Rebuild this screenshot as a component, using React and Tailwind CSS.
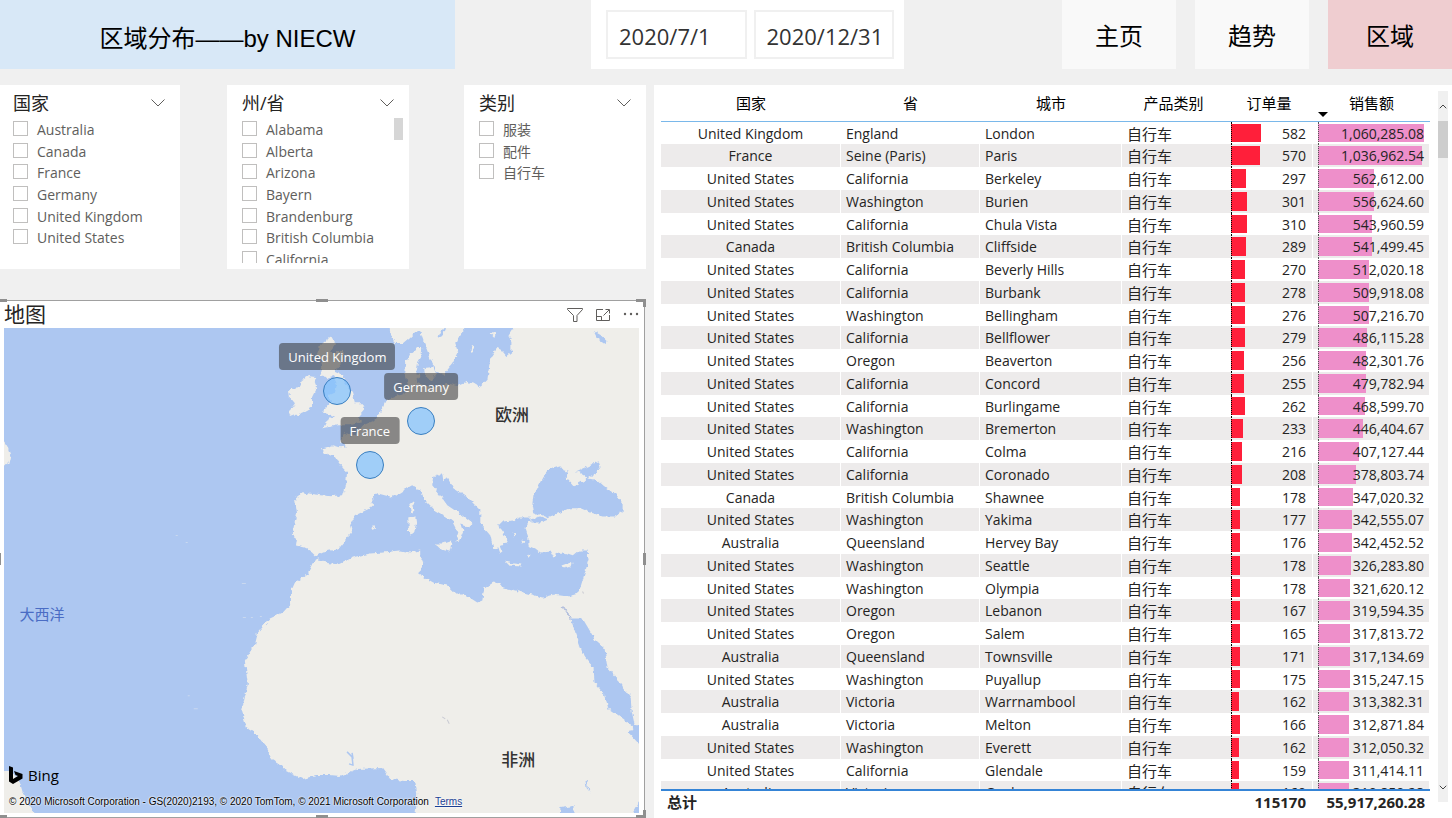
import { useState } from 'react'

const BIKE = '自行车'

const ROWS = [
  ['United Kingdom', 'England', 'London', 582, 1060285.08],
  ['France', 'Seine (Paris)', 'Paris', 570, 1036962.54],
  ['United States', 'California', 'Berkeley', 297, 562612.0],
  ['United States', 'Washington', 'Burien', 301, 556624.6],
  ['United States', 'California', 'Chula Vista', 310, 543960.59],
  ['Canada', 'British Columbia', 'Cliffside', 289, 541499.45],
  ['United States', 'California', 'Beverly Hills', 270, 512020.18],
  ['United States', 'California', 'Burbank', 278, 509918.08],
  ['United States', 'Washington', 'Bellingham', 276, 507216.7],
  ['United States', 'California', 'Bellflower', 279, 486115.28],
  ['United States', 'Oregon', 'Beaverton', 256, 482301.76],
  ['United States', 'California', 'Concord', 255, 479782.94],
  ['United States', 'California', 'Burlingame', 262, 468599.7],
  ['United States', 'Washington', 'Bremerton', 233, 446404.67],
  ['United States', 'California', 'Colma', 216, 407127.44],
  ['United States', 'California', 'Coronado', 208, 378803.74],
  ['Canada', 'British Columbia', 'Shawnee', 178, 347020.32],
  ['United States', 'Washington', 'Yakima', 177, 342555.07],
  ['Australia', 'Queensland', 'Hervey Bay', 176, 342452.52],
  ['United States', 'Washington', 'Seattle', 178, 326283.8],
  ['United States', 'Washington', 'Olympia', 178, 321620.12],
  ['United States', 'Oregon', 'Lebanon', 167, 319594.35],
  ['United States', 'Oregon', 'Salem', 165, 317813.72],
  ['Australia', 'Queensland', 'Townsville', 171, 317134.69],
  ['United States', 'Washington', 'Puyallup', 175, 315247.15],
  ['Australia', 'Victoria', 'Warrnambool', 162, 313382.31],
  ['Australia', 'Victoria', 'Melton', 166, 312871.84],
  ['United States', 'Washington', 'Everett', 162, 312050.32],
  ['United States', 'California', 'Glendale', 159, 311414.11],
  ['Australia', 'Victoria', 'Geelong', 160, 310850.28],
]

const MAX_ORDERS = 582
const MAX_SALES = 1060285.08

const COUNTRIES = ['Australia', 'Canada', 'France', 'Germany', 'United Kingdom', 'United States']
const STATES = ['Alabama', 'Alberta', 'Arizona', 'Bayern', 'Brandenburg', 'British Columbia', 'California']
const CATEGORIES = ['服装', '配件', BIKE]

// positions in percent of the map
const PINS = [
  { name: 'United Kingdom', left: 52.5, top: 13 },
  { name: 'Germany', left: 65.7, top: 19.2 },
  { name: 'France', left: 57.6, top: 28.3 },
]

const money = (n) => n.toLocaleString('en-US', { minimumFractionDigits: 2, maximumFractionDigits: 2 })

function Chevron({ className, strokeWidth = 1 }) {
  return (
    <svg viewBox="-1 -1 16 10" fill="none" stroke="currentColor" strokeWidth={strokeWidth} className={className}>
      <path d="M.5.5 7 7 13.5.5" />
    </svg>
  )
}

function Slicer({ title, items, scrollable, className }) {
  return (
    <section className={`flex h-[184px] flex-col bg-white pb-[6px] ${className}`}>
      <div className="flex h-9 shrink-0 items-center justify-between pr-[14px]">
        <h2 className="text-[18px] leading-6 text-[#252423]">{title}</h2>
        <button type="button" aria-label={title} className="text-[#605e5c]">
          <Chevron className="h-[10px] w-4" />
        </button>
      </div>
      <div className="flex min-h-0 flex-1">
        <ul className="min-w-0 flex-1 overflow-hidden">
          {items.map((item) => (
            <li key={item} className="h-[22px] nth-[3n+2]:h-[21px]">
              <label className="flex h-full items-start gap-[9px] text-[14px] leading-[18px] whitespace-nowrap text-[#605e5c]">
                <input type="checkbox" className="h-[15px] w-[15px] shrink-0 appearance-none border border-[#c0bfbe] bg-white checked:bg-[#605e5c]" />
                {item}
              </label>
            </li>
          ))}
        </ul>
        {scrollable && <div className="mr-[6px] -mt-[3px] h-[22px] w-[9px] bg-[#d6d6d6]" />}
      </div>
    </section>
  )
}

function MapDrawing() {
  return (
    <svg viewBox="4 328 635 484" preserveAspectRatio="xMidYMid slice" className="absolute inset-0 h-full w-full">
      <filter id="coast" x="0" y="0" width="100%" height="100%" colorInterpolationFilters="sRGB">
        <feTurbulence type="fractalNoise" baseFrequency="0.22" numOctaves="2" seed="4" />
        <feDisplacementMap in="SourceGraphic" scale="5" xChannelSelector="R" yChannelSelector="G" />
      </filter>
      <rect x="4" y="328" width="635" height="484" fill="#adc7f1" />
      <g filter="url(#coast)">
        <rect x="-10" y="310" width="670" height="520" fill="#adc7f1" />
        <g fill="#efeeea">
          {/* Europe, Asia Minor and Africa */}
          <path d="M660 310H514L513 328 508 336 511 341 511 352 506 356 501 350 497 348 490 358 488 373 487 380 480 387 475 384 467 382 457 386 445 383 436 387 426 386 417 383 416 374 418 362 421 357 422 348 417 348 410 354 406 362 405 374 408 386 404 394 394 396 385 401 380 413 375 420 363 425 358 431 352 436 344 433 340 441 346 446 340 447 333 445 322 448 325 453 335 457 342 467 347 472 346 485 343 495 330 496 313 494 303 492 295 498 297 512 293 530 293 535 297 538 296 545 305 547 312 552 316 556 323 551 338 549 347 538 352 532 350 525 355 515 370 508 373 505 372 498 377 493 392 497 403 490 412 485 420 490 425 500 435 510 447 517 453 522 458 532 455 541 459 540 463 530 461 524 470 527 472 523 462 515 447 505 440 495 432 485 433 477 442 473 443 480 447 477 453 488 467 497 480 510 480 523 490 535 493 548 498 547 500 553 503 551 500 544 508 543 503 532 498 525 502 521 513 520 520 517 528 517 531 520 527 523 525 528 528 537 528 545 535 548 540 552 550 551 553 556 561 551 573 555 579 550 587 550 588 560 585 570 578 593 567 596 553 594 542 597 523 592 503 587 500 583 493 582 484 588 482 600 477 602 463 593 455 593 447 585 433 582 418 573 423 563 420 556 420 550 410 552 400 550 383 552 370 553 353 557 338 564 325 562 319 558 315 559 308 573 295 583 291 592 291 603 283 612 270 618 258 632 255 644 245 660 248 683 242 710 247 727 255 732 267 747 272 758 287 770 303 778 317 774 330 774 340 775 357 768 382 767 390 778 405 780 415 780 417 793 414 830H660Z" />
          {/* Scandinavia */}
          <path d="M388 310 390 332 395 343 403 343 410 337 416 331 420 332 424 343 430 358 437 373 443 375 452 364 458 352 455 343 463 332 462 310Z" />
          <path d="M424 368 433 367 436 374 431 381 425 376ZM471 346 474 344 473 352 470 353ZM490 334 496 332 494 338ZM414 373 420 374 418 379Z" />
          {/* Great Britain and Ireland */}
          <path d="M332 337 325 341 320 346 317 354 322 361 320 374 326 378 333 376 337 384 335 392 328 395 331 402 322 412 335 416 327 420 323 428 337 425 350 425 361 422 358 417 365 409 362 403 355 403 352 392 345 383 342 375 335 372 344 358 342 352 330 352 336 344Z" />
          <path d="M308 376 315 377 317 387 312 397 312 407 303 412 293 416 288 413 295 403 290 397 289 389 300 388 302 380Z" />
          {/* Mediterranean islands */}
          <path d="M409 504 413 501 414 510 411 513ZM408 517 415 515 416 522 414 532 409 534ZM434 543 443 543 452 540 449 551 441 549ZM371 526 375 526 374 530ZM505 561 513 563 522 564 521 566 509 565ZM562 565 573 561 570 566 564 568ZM512 532 516 534 514 537ZM521 540 525 541 522 543ZM528 553 531 555 528 558Z" />
          {/* west edge */}
          <path d="M-10 440H4L8 446 11 455 9 464H-10ZM-10 770H12L20 780 25 797 33 808 40 830H-10Z" />
        </g>
        <g fill="#adc7f1">
          {/* Black Sea and Sea of Azov */}
          <path d="M532 503 533 495 537 487 543 476 550 468 560 465 562 470 572 473 577 471 588 466 598 461 600 467 595 474 588 478 597 480 606 488 616 495 622 503 622 511 614 516 603 516 590 512 580 508 570 508 560 512 547 517 540 514 534 514ZM531 519 540 516 548 519 540 522 531 522Z" />
          {/* Red Sea */}
          <path d="M570 618 582 618 588 628 595 640 604 648 607 667 618 680 630 697 631 710 634 724 660 728V745H640L628 732 633 726 620 716 608 708 603 693 594 682 593 667 583 655 577 638Z" />
          <path d="M593 331 600 335 606 341 604 344 597 339ZM438 338 441 330 445 329 442 336ZM585 780 587 778 587 786 591 793 586 787ZM558 830 560 807 573 805 573 830ZM622 830 640 799H660V830Z" />
        </g>
        <path d="M563 606 570 618" stroke="#b3bfdd" strokeWidth="2" />
        <path d="M568 470 578 472 588 478 573 486 565 477Z" fill="#efeeea" />
      </g>
      <path d="M347 751 352 756 353 765M349 763 352 764M352 752 353 758" fill="none" stroke="#adc7f1" strokeWidth="1.5" />
      <path d="M442 716 445 718M447 719 449 723M583 593 582 591" fill="none" stroke="#c9cbd3" strokeWidth="1" />
      <path d="M176 535h2M186 542h2M242 583h4M243 617h3M251 617h2M260 616h2M188 695h2M194 708h4" stroke="#c9d8ef" strokeWidth="1" />
    </svg>
  )
}

function MapPanel() {
  return (
    <section className="relative mt-[31px] mr-px flex min-h-0 flex-1 flex-col border-y border-r border-[#a0a0a0] bg-white pr-[5px] pb-1 pl-1">
      <div className="flex h-[27px] shrink-0 items-center justify-between">
        <h2 className="text-[21px] leading-[27px] text-[#252423]">地图</h2>
        <div className="flex items-center gap-3 text-[#605e5c]">
          <button type="button" aria-label="筛选器">
            <svg viewBox="0 0 16 16" fill="none" stroke="currentColor" strokeWidth="1" className="h-4 w-4">
              <path d="M.5 1.5h15v1L10 8.5v6H6.5v-6L.5 2.5Z" />
            </svg>
          </button>
          <button type="button" aria-label="焦点模式">
            <svg viewBox="0 0 16 16" fill="none" stroke="currentColor" strokeWidth="1" className="h-4 w-4">
              <path d="M8 2.5H1.5v11h13V8M1.5 9.5h5v4M8.500 8.500 14 3M10.500 2.500h4v4" />
            </svg>
          </button>
          <button type="button" aria-label="更多选项">
            <svg viewBox="0 0 16 16" fill="currentColor" className="h-4 w-4">
              <circle cx="2" cy="7" r="1.200" />
              <circle cx="8" cy="7" r="1.200" />
              <circle cx="14" cy="7" r="1.200" />
            </svg>
          </button>
        </div>
      </div>

      <div className="relative min-h-0 flex-1 overflow-hidden">
        <MapDrawing />
        <span className="absolute top-[18%] left-[80%] -translate-x-1/2 -translate-y-1/2 text-[17px] font-medium text-[#333]">欧洲</span>
        <span className="absolute top-[89%] left-[81%] -translate-x-1/2 -translate-y-1/2 text-[17px] font-medium text-[#333]">非洲</span>
        <span className="absolute top-[59%] left-[6%] -translate-x-1/2 -translate-y-1/2 text-[15px] text-[#4a6cc4]">大西洋</span>

        {PINS.map((pin) => (
          <div key={pin.name} className="absolute" style={{ left: `${pin.left}%`, top: `${pin.top}%` }}>
            <span className="absolute bottom-[21px] left-0 -translate-x-1/2 rounded-[4px] bg-[#333]/55 px-[9px] pt-px text-[13px] leading-[26px] whitespace-nowrap text-white">
              {pin.name}
            </span>
            <span className="absolute h-7 w-7 -translate-x-1/2 -translate-y-1/2 rounded-full border border-[#3a7fc0] bg-[#85c3fc]/75" />
          </div>
        ))}

        <div className="absolute bottom-1 left-[5px]">
          <div className="flex items-center gap-[5px] text-[15px] leading-5 text-black">
            <svg viewBox="0 0 14 20" className="h-5 w-3.5">
              <path d="M0 1 4 2.500V14l5-3-2.500-1L5 6l8.500 3v4.500L4 19l-4-2.500Z" />
            </svg>
            Bing
          </div>
          <p className="mt-[10px] flex gap-1.5 font-['Liberation_Sans'] text-[10px] leading-[14px] whitespace-nowrap text-black [text-shadow:0_0_2px_#fff,0_0_2px_#fff]">
            © 2020 Microsoft Corporation - GS(2020)2193, © 2020 TomTom, © 2021 Microsoft Corporation
            <a href="#terms" className="text-[#1b3f94] underline">Terms</a>
          </p>
        </div>
      </div>

      {/* resize handles */}
      <span className="absolute -top-[2px] left-0 h-[3px] w-[7px] bg-[#8f8f8f]" />
      <span className="absolute -top-[2px] left-1/2 h-[3px] w-3 -translate-x-1/2 bg-[#8f8f8f]" />
      <span className="absolute -top-[2px] -right-[2px] h-2 w-[10px] border-t-[3px] border-r-[3px] border-[#8f8f8f]" />
      <span className="absolute top-1/2 left-0 h-3 w-px -translate-y-1/2 bg-[#8f8f8f]" />
      <span className="absolute top-1/2 -right-[2px] h-3 w-[3px] -translate-y-1/2 bg-[#8f8f8f]" />
      <span className="absolute -bottom-px left-0 h-[3px] w-[7px] bg-[#8f8f8f]" />
      <span className="absolute -bottom-px left-1/2 h-[3px] w-3 -translate-x-1/2 bg-[#8f8f8f]" />
      <span className="absolute -right-[2px] -bottom-px h-2 w-[10px] border-r-[3px] border-b-[3px] border-[#8f8f8f]" />
    </section>
  )
}

const HEAD = 'relative border-b border-[#7ab8ea] p-0 text-center text-[15px] font-normal text-black'
const CELL = 'border-r border-r-white p-0 pt-[2px] align-top leading-5'
const FOOT = 'border-t-2 border-[#3584d6] bg-white p-0 pb-[5px] text-[15px] leading-[22px]'

function SalesTable() {
  return (
    <section className="flex min-w-0 flex-1 bg-white pl-[7px]">
      <div className="min-w-0 flex-1 overflow-hidden">
        <table className="w-full table-fixed border-separate border-spacing-0 text-[14px] text-[#252423]">
          <colgroup>
            <col />
            <col className="w-[139px]" />
            <col className="w-[142px]" />
            <col className="w-[109px]" />
            <col className="w-[82px]" />
            <col className="w-[117px]" />
          </colgroup>
          <thead>
            <tr className="h-[37px]">
              <th className={HEAD}>国家</th>
              <th className={HEAD}>省</th>
              <th className={HEAD}>城市</th>
              <th className={`${HEAD} pr-[6px]`}>产品类别</th>
              <th className={`${HEAD} pr-[6px]`}>订单量</th>
              <th className={HEAD}>
                销售额
                <span className="absolute bottom-1 left-[5px] border-x-[5px] border-t-[5px] border-x-transparent border-t-black" />
              </th>
            </tr>
          </thead>
          <tbody>
            {ROWS.map(([country, state, city, orders, sales]) => (
              <tr key={city} className="h-[23px] even:bg-[#edebeb] nth-[4n+1]:h-[22px]">
                <td className={`${CELL} text-center`}>{country}</td>
                <td className={`${CELL} pl-[5px]`}>{state}</td>
                <td className={`${CELL} pl-[5px]`}>{city}</td>
                <td className="p-0 pt-[2px] pl-[5px] align-top text-[15px] leading-5">{BIKE}</td>
                <td className={`${CELL} relative pr-[6px] text-right`}>
                  <div className="absolute inset-y-0 left-0 w-[30px] py-[2px]">
                    <div className="h-full bg-[#ff1f3a]" style={{ width: `${(orders / MAX_ORDERS) * 100}%` }} />
                  </div>
                  <div className="absolute inset-y-0 left-0 border-l border-dotted border-black" />
                  {orders}
                </td>
                <td className={`${CELL} relative pr-[5px] text-right`}>
                  <div className="absolute inset-y-0 right-[5px] left-[5px] py-[2px]">
                    <div className="h-full bg-[#ee8fca]" style={{ width: `${(sales / MAX_SALES) * 100}%` }} />
                  </div>
                  <div className="absolute inset-y-0 left-[5px] border-l border-dotted border-[#555]" />
                  <span className="relative">{money(sales)}</span>
                </td>
              </tr>
            ))}
          </tbody>
          <tfoot className="sticky bottom-0 z-10">
            <tr className="h-[29px] font-bold">
              <th colSpan={4} className={`${FOOT} pl-[6px] text-left`}>总计</th>
              <td className={`${FOOT} pr-[7px] text-right`}>115170</td>
              <td className={`${FOOT} pr-[5px] text-right`}>55,917,260.28</td>
            </tr>
          </tfoot>
        </table>
      </div>
      <div className="mt-[6px] mr-1 mb-4 ml-2 flex w-[10px] shrink-0 flex-col items-center bg-[#f0f0f0] text-[#444]">
        <button type="button" aria-label="向上滚动" className="flex h-[30px] items-center">
          <Chevron strokeWidth={2} className="h-[5px] w-2 rotate-180" />
        </button>
        <div className="h-[37px] w-full bg-[#cdcdcd]" />
        <button type="button" aria-label="向下滚动" className="mt-auto flex h-[30px] items-center">
          <Chevron strokeWidth={2} className="h-[5px] w-2" />
        </button>
      </div>
    </section>
  )
}

const DATE_INPUT = 'h-[49px] min-w-0 flex-1 border-2 border-[#f0f0f0] bg-white px-[11px] pt-[2px] text-[22px] text-[#333]'

const TABS = ['主页', '趋势', '区域']

export default function App() {
  const [tab, setTab] = useState('区域')
  const [from, setFrom] = useState('2020/7/1')
  const [to, setTo] = useState('2020/12/31')

  return (
    <main className="flex h-screen min-h-[600px] flex-col bg-[#f0f0f0] font-['Open_Sans','Noto_Sans_CJK_SC',sans-serif]">
      <header className="flex h-[69px] shrink-0">
        <h1 className="flex w-[455px] shrink-0 items-center justify-center bg-[#d8e8f7] pt-2 font-['Liberation_Sans','Noto_Sans_CJK_SC',sans-serif] text-[24px] text-black">
          区域分布——by NIECW
        </h1>
        <div className="ml-[136px] flex w-[313px] shrink-0 gap-[7px] bg-white pt-[10px] pr-[10px] pl-[15px]">
          <input aria-label="开始日期" value={from} onChange={(e) => setFrom(e.target.value)} className={DATE_INPUT} />
          <input aria-label="结束日期" value={to} onChange={(e) => setTo(e.target.value)} className={DATE_INPUT} />
        </div>
        <nav className="ml-auto flex gap-[19px]">
          {TABS.map((name) => (
            <button
              key={name}
              type="button"
              onClick={() => setTab(name)}
              className={`pt-[2px] text-[24px] text-black ${name === tab ? 'w-[124px] bg-[#efcdd0]' : 'w-[114px] bg-[#f9f9f9]'}`}
            >
              {name}
            </button>
          ))}
        </nav>
      </header>

      <div className="mt-4 flex min-h-0 flex-1 gap-2">
        <div className="flex w-[646px] shrink-0 flex-col">
          <div className="flex">
            <Slicer title="国家" items={COUNTRIES} className="w-[180px] pl-[13px]" />
            <Slicer title="州/省" items={STATES} scrollable className="ml-[47px] w-[182px] pl-[15px]" />
            <Slicer title="类别" items={CATEGORIES} className="ml-auto w-[182px] pl-[15px]" />
          </div>
          <MapPanel />
        </div>
        <SalesTable />
      </div>
    </main>
  )
}
